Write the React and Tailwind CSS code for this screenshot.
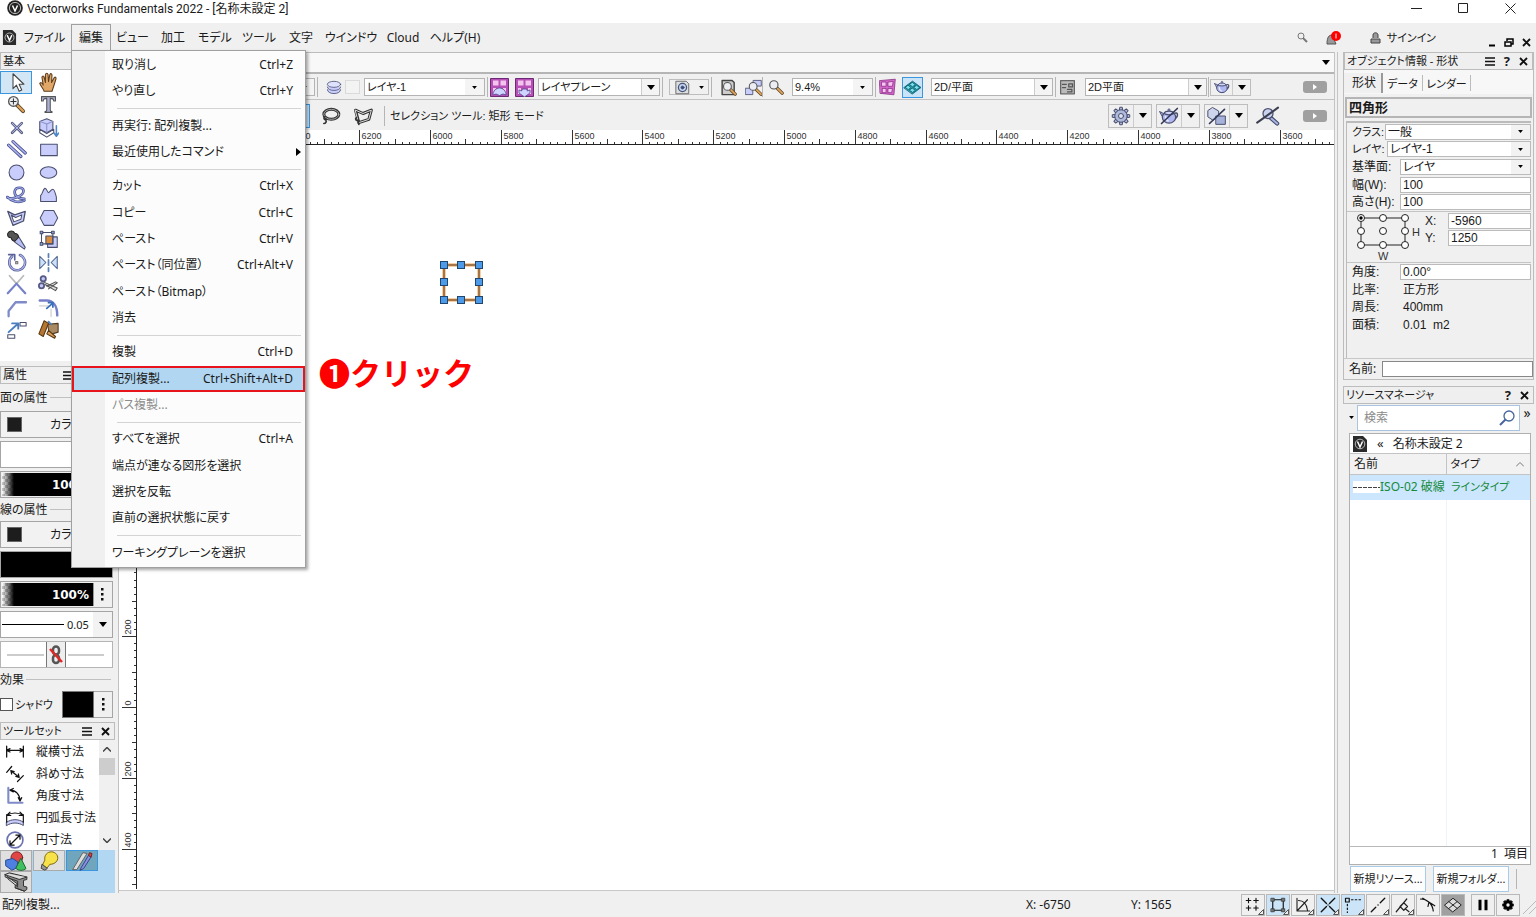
// src/App.jsx

import React from 'react';

const Icon = ({ w = 22, h = 22, box = '0 0 24 24', children }) => (
  <svg width={w} height={h} viewBox={box} fill="none" stroke="#4a4f6e" strokeWidth="1.2" strokeLinejoin="round" strokeLinecap="round" className="shrink-0" aria-hidden="true">
    {children}
  </svg>
);

const Caret = ({ small }) => (
  <svg width={small ? 5 : 8} height={small ? 3 : 5} viewBox="0 0 8 5" className="shrink-0" aria-hidden="true">
    <path d="M0 0h8L4 5z" fill="#000" />
  </svg>
);

const Burger = () => (
  <svg width="10" height="9" viewBox="0 0 10 9" aria-hidden="true">
    <path d="M0 1h10M0 4.500h10M0 8h10" stroke="#111" strokeWidth="1.600" />
  </svg>
);

const Cross = () => (
  <svg width="9" height="9" viewBox="0 0 9 9" aria-hidden="true">
    <path d="M1 1l7 7M8 1L1 8" stroke="#111" strokeWidth="1.900" />
  </svg>
);

const VLogo = ({ size = 16, square }) => (
  <svg width={size} height={size} viewBox="0 0 16 16" className="shrink-0" aria-hidden="true">
    {square ? <path d="M1 0h10l4 4v12H1z" fill="#2b2b2b" /> : <circle cx="8" cy="8" r="7.800" fill="#222" />}
    <circle cx="8" cy="8" r={square ? 4.8 : 5.6} fill="none" stroke="#bbb" strokeWidth="1" />
    <path d="M5.500 5.500L8 11l2.500-5.500" fill="none" stroke="#fff" strokeWidth="1.500" />
  </svg>
);

const Lens = ({ x = 0, y = 0 }) => (
  <g transform={`translate(${x} ${y})`}>
    <path d="M12.500 12.500l7 7" stroke="#5d4426" strokeWidth="4.500" />
    <path d="M13.500 13.500l6 6" stroke="#e0a55b" strokeWidth="2.500" />
    <circle cx="8.500" cy="8.500" r="5.500" fill="#eceef4" stroke="#555" strokeWidth="1.500" />
  </g>
);

const BLUE = '#c9cdfb';
const LINE = '#7f8ac8';

const basicTools = [
  ['選択', <path d="M8 2v17l4-4 3 7 3-1.500-3-6.500h5.500z" fill="#fff" stroke="#444" />],
  ['パン', <path d="M7 22c-1-3-4-6-5-9 1-2 3 0 4 2L4.500 6c.5-2 2-2 2.500 0l1.500 6L8.500 3c.5-2 2.500-2 3 0l.5 8 1.500-8c1-2 2.500-1 2.500.5L15.500 12l3-5.500c1.500-1.500 2.500 0 2 1.500L18 16l-2 6z" fill="#e0a767" stroke="#5b3c1c" />],
  ['ズーム', <><Lens /><path d="M5.500 8.500h6M8.500 5.500v6" stroke="#333" /></>],
  ['文字', <path d="M4 3h16v5h-2c0-2-1-3-4-3v13c0 1 1 2 2 2v1H8v-1c1 0 2-1 2-2V5C7 5 6 6 6 8H4z" fill="#aab0d4" stroke="#555" />],
  ['2D基準点', <><path d="M7 7l11 11M18 7L7 18" stroke="#4a4f6e" strokeWidth="3" /><path d="M7 7l11 11M18 7L7 18" stroke="#b4baf0" strokeWidth="1.200" /></>],
  ['押し出し', <><path d="M2 14l8 5 8-5v4l-8 5-8-5z" fill="#fff" /><path d="M2 5l8-3 7 3v9l-7 4-8-4z" fill={BLUE} /><path d="M2 5l8 3 7-3M10 8v10" stroke="#8890c8" /><path d="M21 10v11M18.500 18.500L21 22l2.500-3.500" stroke="#4b86c8" strokeWidth="1.800" /></>],
  ['ダブルライン', <><path d="M3 7l14 13M8 3l14 13" stroke="#4a4f8e" strokeWidth="3.600" /><path d="M3 7l14 13M8 3l14 13" stroke="#a9b2ee" strokeWidth="1.800" /></>],
  ['四角形', <path d="M3 6h19v13H3z" fill={BLUE} />],
  ['円', <circle cx="12" cy="12" r="8.500" fill={BLUE} />],
  ['長円', <ellipse cx="12" cy="12" rx="9.500" ry="6.500" fill={BLUE} />],
  ['フリーハンド', <><path d="M1 15c5 4 19-1 19-7 0-5-9-5-10 0-1 6 5 9 11 9M2 15c4 5 12 7 19 4" stroke="#4a5494" strokeWidth="3" /><path d="M1 15c5 4 19-1 19-7 0-5-9-5-10 0-1 6 5 9 11 9M2 15c4 5 12 7 19 4" stroke="#a3adeb" strokeWidth="1.200" /></>],
  ['曲線', <path d="M3 20v-7c2-1 3-8 5-8s3 5 4 5 3-4 5-4 3 6 4 9v5z" fill={BLUE} />],
  ['ポリライン', <><path d="M2 5l8 4 12-4-2 11-12 5z" fill={BLUE} strokeWidth="1.500" /><path d="M6 9l5 3 7-3-1 5-8 3z" fill="#fff" /></>],
  ['多角形', <path d="M7 4h11l4.500 8.500L18 21H7l-4.500-8.500z" fill={BLUE} />],
  ['アイドロッパ', <><path d="M10 10l4-2 8 13-1 2-11-8z" fill="#b9c0f5" /><path d="M2 5c2-4 7-3 8 0 3 0 5 3 4 5l-4 4c-2 0-4-2-4-4-3 0-5-2-4-5z" fill="#555" stroke="#222" /></>],
  ['クリップ', <><path d="M11 9h11v12H11z" fill={BLUE} /><path d="M9 8h8v9H9z" fill="#d98e3f" /><path d="M4 4h13v13H4z" /><path d="M2.500 2.500h3v3h-3zM15.500 2.500h3v3h-3zM2.500 15.500h3v3h-3z" fill="#8fa7e0" /></>],
  ['回転', <><path d="M7 5a9 9 0 1 0 9-1.500" stroke="#59619a" strokeWidth="3" /><path d="M7 5a9 9 0 1 0 9-1.500" stroke="#b6bdf3" strokeWidth="1.300" /><path d="M3 3h7v6" stroke="#59619a" strokeWidth="1.800" /><path d="M11 11h2.500v2.500H11z" fill="#ccc" stroke="#777" /></>],
  ['ミラー反転', <><path d="M2 5l7 7-7 7zM22 5l-7 7 7 7z" fill="#cfe0fa" stroke="#4d6591" /><path d="M12 2v4M12 9v6M12 18v4" stroke="#5a80b8" strokeWidth="2" /></>],
  ['トリム', <><path d="M4 2l8 9 8-9" stroke="#bbb" strokeWidth="2" /><path d="M2 22l10-11 10 11" stroke="#7680c8" strokeWidth="2.500" /></>],
  ['切断', <><path d="M6 9l16 7-2 3-12-7M10 14L20 9l2 1-10 7" fill="#ddd" stroke="#555" /><circle cx="6" cy="5.500" r="3" fill="#c5c9f4" stroke="#555a85" strokeWidth="2" /><circle cx="4" cy="13.500" r="3" fill="#c5c9f4" stroke="#555a85" strokeWidth="2" /></>],
  ['フィレット', <path d="M3 22v-6l8-10h12" stroke={LINE} strokeWidth="2.600" />],
  ['オフセット', <><path d="M2 4h8c8 0 12 7 12 17" stroke="#7680c8" strokeWidth="2.800" /><path d="M2 10h10M15 14v8" stroke="#ddd" strokeWidth="2" /><path d="M10 13l7-6M12 6.500h5v5" stroke="#3a70b8" strokeWidth="2" /></>],
  ['移動', <><path d="M2 18h8v4H2zM16 4h7v4h-7z" fill="#fff" /><path d="M3 15l10-9M7 5h7v6" stroke="#4d7ec0" strokeWidth="2.200" /></>],
  ['属性マッピング', <><path d="M11 6l12-1v10l-10 3z" fill="#a98a63" stroke="#4e3a22" /><path d="M7 2l5 3-6 15-5-3z" fill="#b57632" stroke="#56350f" /><path d="M12 13l8 7-1 2-9-5z" fill="#d69b58" stroke="#56350f" /><path d="M12 3l3 3" stroke="#4d7ec0" strokeWidth="2" /></>],
];

const dimensionTools = [
  ['縦横寸法', <path d="M2 5v13M22 5v13M2 10h20M6 8l-4 2 4 2M18 8l4 2-4 2" stroke="#111" strokeWidth="1.500" />],
  ['斜め寸法', <path d="M2 10l6-7M15 21l7-7M7 8l10 8M7 8l4 1M7 8l1 4M17 16l-4-1M17 16l-1-4" stroke="#111" strokeWidth="1.500" />],
  ['角度寸法', <><path d="M4 2v18h17" stroke={LINE} strokeWidth="2.500" /><path d="M6 5c7 0 12 5 12 13M6 5l4-2M6 5l4 2M18 18l-2-4M18 18l2-4" stroke="#111" strokeWidth="1.500" /></>],
  ['円弧長寸法', <><path d="M2 17c6-4 14-4 20 0v4c-6-4-14-4-20 0z" fill={BLUE} /><path d="M2 8v9M22 8v9M2 9c6-4 14-4 20 0M6 5L2 9h5M18 5l4 4h-5" stroke="#111" strokeWidth="1.400" /></>],
  ['円寸法', <><circle cx="12" cy="12" r="9.500" stroke="#6a73b2" strokeWidth="2" /><path d="M6 18L18 6M13 6h5v5M6 13v5h5" stroke="#111" strokeWidth="1.500" /></>],
];

const menuBar = [
  ['ファイル', 'w-[51px]'],
  ['編集', 'w-[40px]'],
  ['ビュー', 'w-[41px]'],
  ['加工', 'w-[40px]'],
  ['モデル', 'w-[44px]'],
  ['ツール', 'w-[44px]'],
  ['文字', 'w-[40px]'],
  ['ウインドウ', 'w-[60px]'],
  ['Cloud', 'w-[44px]'],
  ['ヘルプ(H)', 'w-[60px]'],
];

const editMenu = [
  ['取り消し', 'Ctrl+Z'],
  ['やり直し', 'Ctrl+Y'],
  null,
  ['再実行: 配列複製...', ''],
  ['最近使用したコマンド', '', 'sub'],
  null,
  ['カット', 'Ctrl+X'],
  ['コピー', 'Ctrl+C'],
  ['ペースト', 'Ctrl+V'],
  ['ペースト（同位置）', 'Ctrl+Alt+V'],
  ['ペースト（Bitmap）', ''],
  ['消去', ''],
  null,
  ['複製', 'Ctrl+D'],
  ['配列複製...', 'Ctrl+Shift+Alt+D', 'active'],
  ['パス複製...', '', 'disabled'],
  null,
  ['すべてを選択', 'Ctrl+A'],
  ['端点が連なる図形を選択', ''],
  ['選択を反転', ''],
  ['直前の選択状態に戻す', ''],
  null,
  ['ワーキングプレーンを選択', ''],
];

const EditMenu = () => (
  <div role="menu" className="absolute left-[71px] top-[50px] z-20 flex h-[518px] w-[235px] flex-col border border-[#a0a0a0] bg-[linear-gradient(to_right,#f0f0f0_33px,#fcfcfc_33px)] py-px shadow-[2px_2px_3px_rgba(0,0,0,0.35)]">
    {editMenu.map((item, i) =>
      item === null ? (
        <div key={i} role="separator" className="flex h-2 shrink-0 items-center pl-[45px] pr-1">
          <span className="h-px w-full bg-[#d4d4d4]" />
        </div>
      ) : (
        <button
          key={i}
          role="menuitem"
          disabled={item[2] === 'disabled'}
          className={
            'flex min-h-0 flex-1 items-center justify-between whitespace-nowrap border-2 pl-[38px] pr-[10px] disabled:text-[#8c8c8c] ' +
            (item[2] === 'active' ? 'border-[#e8141c] bg-[#b1d6f1]' : 'border-transparent')
          }
        >
          <span>{item[0]}</span>
          <span>{item[1]}</span>
          {item[2] === 'sub' && (
            <svg width="5" height="8" viewBox="0 0 5 8" className="-mr-2" aria-hidden="true">
              <path d="M0 0v8l5-4z" fill="#000" />
            </svg>
          )}
        </button>
      )
    )}
  </div>
);

const Sep = ({ className = '' }) => <span className={'h-5 w-px shrink-0 bg-[#b5b5b5] ' + className} />;

const Drop = ({ label, value, className = '', small }) => (
  <div className={'flex h-[18px] shrink-0 items-center border border-[#b4b4b4] bg-white ' + className}>
    <select aria-label={label} className="h-full min-w-0 flex-1 appearance-none bg-white pl-[2px] text-[11px] leading-none outline-none">
      <option>{value}</option>
    </select>
    <span className={'flex h-full shrink-0 items-center justify-center bg-[#f4f4f4] ' + (small ? 'w-[19px]' : 'w-[18px] border-l border-[#ccc]')}>
      <Caret small={small} />
    </span>
  </div>
);

const SplitButton = ({ label, children, className = '' }) => (
  <div className={'flex shrink-0 border border-[#bdbdbd] ' + className}>
    <button aria-label={label} className="flex flex-1 items-center justify-center">{children}</button>
    <button aria-label={label + 'の設定'} className="flex w-[18px] items-center justify-center border-l border-[#ccc]"><Caret /></button>
  </div>
);

const Pill = () => (
  <button aria-label="その他" className="ml-auto mr-[7px] flex h-3 w-6 items-center justify-center rounded-[3px] bg-[#a0a0a0]">
    <svg width="4" height="6" viewBox="0 0 4 6" aria-hidden="true"><path d="M0 0v6l4-3z" fill="#fff" /></svg>
  </button>
);

const PlaneIcon = ({ down }) => (
  <svg width="19" height="19" viewBox="0 0 19 19" className="shrink-0" aria-hidden="true">
    <path d="M.5.500h18v18H.500z" fill="#b650b6" stroke="#6c2a75" />
    <path d="M3 2.500h5.500v5H3zM10.500 2.500H16v5h-5.500zM3 10h3v6H3zM13 10h3v6h-3z" fill="#f3c4ee" />
    <path d={down ? 'M4 12l2.500 1 1-2h4l1 2 2.500-1v3l-5.500 4L4 15z' : 'M3 17c0-4 3-7 6.500-7s6.500 3 6.500 7l-3-1-3.500 1.500L6 16z'} fill="#cfd3ff" stroke="#4f4a8c" strokeWidth=".8" />
  </svg>
);

const Teapot = () => (
  <>
    <path d="M18 9c5-3 6 4 0 7" strokeWidth="1.800" />
    <path d="M1 7l3 1c2 2 2 4 3 7-3-1-4-4-6-8z" fill="#9ca6e4" />
    <ellipse cx="12" cy="13.500" rx="8" ry="7" fill="#b0b8f2" strokeWidth="1.500" />
    <path d="M6 9c1-4 11-4 12 0-3 2-9 2-12 0z" fill="#cfd4fb" strokeWidth="1.500" />
    <path d="M11 5.500c-1-3 3-3 2 0" fill="#b0b8f2" />
    <path d="M8 13c0 2 1 4 3 5" stroke="#eef" strokeWidth="1.800" />
  </>
);

const ViewBar = () => (
  <div className="flex h-[25px] items-center border-b border-[#c2c2c2]">
    <Drop label="クラス" value="一般" small className="w-[196px]" />
    <Sep className="ml-[2px] mr-2" />
    <Icon w={16} h={16}>
      <path d="M2 16c0 8 20 8 20 0M2 12c0 7 20 7 20 0" fill={BLUE} />
      <ellipse cx="12" cy="8" rx="10" ry="4.500" fill="#dfe2ff" />
    </Icon>
    <span className="ml-[3px] mr-1 h-[14px] w-[15px] border border-[#dadada] bg-[#f3f3f3]" />
    <Drop label="レイヤ" value="レイヤ-1" small className="w-[121px]" />
    <Sep className="mx-[2px]" />
    <button aria-label="上のレイヤ"><PlaneIcon /></button>
    <button aria-label="下のレイヤ" className="ml-[6px]"><PlaneIcon down /></button>
    <Drop label="プレーン" value="レイヤプレーン" className="ml-1 w-[122px]" />
    <Sep className="ml-[2px] mr-[6px]" />
    <div className="flex h-4 w-10 shrink-0 items-center justify-around border border-[#bdbdbd]">
      <Icon w={15} h={15}>
        <path d="M2 2h16l4 4v16H2z" fill="#ddd" stroke="#666" strokeWidth="1.500" />
        <circle cx="12" cy="12" r="6.500" fill="#cdd5f0" stroke="#3f567c" strokeWidth="2" />
        <circle cx="12" cy="12" r="2.500" fill="#33507c" />
      </Icon>
      <Caret small />
    </div>
    <Sep className="ml-[2px] mr-2" />
    <button aria-label="用紙全体を見る"><Icon w={17} h={17}><path d="M3 2h14l3 3v17H3z" fill="#ccc" stroke="#444" strokeWidth="2" /><Lens x={2} y={2} /></Icon></button>
    <button aria-label="図形全体を見る" className="ml-2"><Icon w={17} h={17}><path d="M12 2h11v8H12zM1 13h10v9H1z" fill={BLUE} /><Lens x={3} y={2} /></Icon></button>
    <Sep className="mr-[6px]" />
    <button aria-label="ズーム"><Icon w={15} h={15} box="2 2 20 20"><Lens /></Icon></button>
    <Drop label="縮尺" value="9.4%" small className="ml-2 w-[81px]" />
    <Sep className="mx-[2px]" />
    <button aria-label="マルチビュー" className="ml-px">
      <Icon w={17} h={18}>
        <path d="M1 3l22-2-2 22-19-2z" fill="#d867cf" stroke="#8d3688" />
        <path d="M4 5h6v6H4zM13 5l7-1-1 7h-6zM5 14h5v6H5zM13 14h6l-1 6h-5z" fill="#f7c6f2" stroke="#8d3688" />
      </Icon>
    </button>
    <button aria-label="統合ビュー" className="ml-[6px] flex size-[21px] items-center justify-center border border-[#3b96dd] bg-[#c9e3f7]">
      <Icon w={19} h={17}>
        <path d="M0 12L12 3l12 9-12 9z" fill="#2fa3b3" stroke="#0b5d70" />
        <path d="M12 5l4 3-4 3-4-3zM6 9l4 3-4 3-4-3zM18 9l4 3-4 3-4-3zM12 13l4 3-4 3-4-3z" fill="#7be0e8" stroke="#0b5d70" />
      </Icon>
    </button>
    <Drop label="現在のビュー" value="2D/平面" className="ml-2 w-[122px]" />
    <Sep className="ml-[2px] mr-1" />
    <Icon w={15} h={15}>
      <path d="M1 1h22v21H1z" fill="#bbb" stroke="#666" strokeWidth="2" />
      <path d="M4 7h6M4 12h5M14 6h6v5h-6zM12 15h7v4h-7" stroke="#555" strokeWidth="2" />
    </Icon>
    <Drop label="投影の方法" value="2D平面" className="ml-[10px] w-[122px]" />
    <Sep className="mx-px" />
    <SplitButton label="レンダリング" className="h-[17px] w-[41px]"><Icon w={16} h={16}><Teapot /></Icon></SplitButton>
    <Pill />
  </div>
);

const GEAR_TEETH = [0, 45, 90, 135, 180, 225, 270, 315];

const ModeBar = () => (
  <div className="flex h-[30px] items-center pt-px">
    <button aria-label="矩形モード" className="ml-[164px] h-6 w-[27px] shrink-0 border border-[#3b96dd] bg-[#c9e3f7]" />
    <button aria-label="なげなわモード" className="ml-[10px]">
      <Icon w={21} h={20}>
        <ellipse cx="13" cy="10" rx="9" ry="6" stroke="#333" strokeWidth="3.600" />
        <ellipse cx="13" cy="10" rx="9" ry="6" stroke="#bbb" strokeWidth="1" />
        <path d="M5 13c-2 2 0 4 2 3M6 16c2 3 0 5-2 5" stroke="#333" strokeWidth="2" />
      </Icon>
    </button>
    <button aria-label="多角形モード" className="ml-[11px]">
      <Icon w={22} h={20}>
        <path d="M3 5l9 4 10-4-3 11-12 4z" stroke="#333" strokeWidth="3.600" />
        <path d="M3 5l9 4 10-4-3 11-12 4z" stroke="#ddd" strokeWidth="1.200" />
        <path d="M4 14c-2 2 0 4 2 3M6 17l1 5" stroke="#333" strokeWidth="2" />
      </Icon>
    </button>
    <Sep className="ml-[10px] mr-[5px]" />
    <span className="whitespace-nowrap text-[11px]">セレクション ツール: 矩形 モード</span>
    <div className="ml-auto flex shrink-0 items-center gap-1 pr-[22px]">
      <SplitButton label="環境設定" className="h-6 w-11">
        <Icon w={20} h={20}>
          {GEAR_TEETH.map((a) => (
            <path key={a} d="M10 5l.5-3.500h3L14 5z" fill="#aeb9dc" transform={`rotate(${a} 12 12)`} />
          ))}
          <circle cx="12" cy="12" r="7.500" fill="#aeb9dc" />
          <circle cx="12" cy="12" r="3" fill="#dfe4f5" />
        </Icon>
      </SplitButton>
      <SplitButton label="レンダー表示" className="h-6 w-11">
        <Icon w={20} h={20}><Teapot /><path d="M3 21L22 3" stroke="#333a58" strokeWidth="2" /></Icon>
      </SplitButton>
      <SplitButton label="図形表示" className="h-6 w-11">
        <Icon w={20} h={20}><path d="M7 2l7 4v7l-7 4-6-4V6z" fill="#ccd5ec" /><path d="M11 12h11v10H11z" fill="#a6b2da" /><path d="M3 21L21 4" stroke="#333a58" strokeWidth="2" /></Icon>
      </SplitButton>
      <button aria-label="クイック検索" className="ml-[3px]">
        <Icon w={26} h={20} box="0 0 30 24">
          <path d="M18 14l8 7" stroke="#3f486b" strokeWidth="5" />
          <path d="M19 15l7 6" stroke="#a8b6e0" strokeWidth="2.500" />
          <circle cx="15" cy="9" r="6" fill="#c9d3f0" strokeWidth="1.500" />
          <path d="M2 20L27 2" stroke="#3c4052" strokeWidth="2.500" />
        </Icon>
      </button>
    </div>
    <div className="flex shrink-0"><Pill /></div>
  </div>
);

// ruler scale: 200mm is 70.8px on screen
const STEP = 70.8;

const rulerTicks = (origin, from, to) => {
  const ticks = [];
  const unit = STEP / 10;
  for (let n = Math.ceil((from - origin) / unit); origin + n * unit < to; n++) {
    ticks.push({ n, pos: Math.round(origin + n * unit) + 0.5 });
  }
  return ticks;
};

const TopRuler = () => (
  <div className="h-[15px] bg-white">
    <svg width="1216" height="15" className="font-['Liberation_Sans']" aria-hidden="true">
      {rulerTicks(311, 18, 1216).map(({ n, pos }) => (
        <g key={n}>
          <path d={`M${pos} ${n % 10 === 0 ? 0 : n % 5 === 0 ? 9 : 12}V15`} stroke="#333" />
          {n % 10 === 0 && <text x={pos + 2} y="9" fontSize="9" fill="#333">{6000 - n * 20}</text>}
        </g>
      ))}
      <path d="M18 14.500H1216" stroke="#222" />
    </svg>
  </div>
);

const SideRuler = () => (
  <svg width="18" height="744" className="shrink-0 font-['Liberation_Sans']" aria-hidden="true">
    {rulerTicks(562, 0, 744).map(({ n, pos }) => (
      <g key={n}>
        <path d={`M${n % 10 === 0 ? 3 : n % 5 === 0 ? 13 : 15} ${pos}H18`} stroke="#333" />
        {n % 10 === 0 && (
          <text transform={`translate(12 ${pos - 2}) rotate(-90)`} fontSize="9" fill="#333">{Math.abs(n * 20)}</text>
        )}
      </g>
    ))}
    <path d="M17.500 0V744" stroke="#222" />
  </svg>
);

const handles = [[0, 0], [17, 0], [35, 0], [0, 17], [35, 17], [0, 35], [17, 35], [35, 35]];

const Canvas = () => (
  <div className="relative min-h-0 flex-1 overflow-hidden border-b border-[#c8c8c8] bg-white">
    <SideRuler />
    <svg width="44" height="44" className="absolute left-[321px] top-[115px]" aria-hidden="true">
      <path d="M4 5h35v35H4z" fill="none" stroke="#f0a050" strokeWidth="3" />
      <path d="M4 5h35v35H4z" fill="none" stroke="#5b4a3a" strokeWidth="1" />
      {handles.map(([x, y]) => (
        <rect key={x + '-' + y} x={x + 0.5} y={y + 1.5} width="7" height="7" fill="#4d9be8" stroke="#1f4670" />
      ))}
    </svg>
    <div className="absolute left-[200px] top-[208px] whitespace-nowrap text-[31px] font-bold leading-[44px] text-[#f00] [font-feature-settings:normal]">
      ❶クリック
    </div>
  </div>
);

const PanelHeader = ({ title, help, burger }) => (
  <div className="flex h-[18px] shrink-0 items-center justify-between border border-[#bcbcbc] bg-[#efefef] pl-[2px] pr-1">
    <h2 className="whitespace-nowrap text-[11px]">{title}</h2>
    <div className="flex items-center gap-[9px]">
      {burger && <button aria-label="メニュー"><Burger /></button>}
      {help && <button className="text-[13px] font-bold leading-none">?</button>}
      <button aria-label="閉じる"><Cross /></button>
    </div>
  </div>
);

const GroupTitle = ({ children, className = 'h-[23px]' }) => (
  <div className={'flex shrink-0 items-center whitespace-nowrap ' + className}>
    {children}
    <span className="ml-[2px] mr-1 h-px flex-1 bg-[#c0c0c0]" />
  </div>
);

const ColorRow = ({ label }) => (
  <button aria-label={label} className="flex h-[27px] w-[113px] shrink-0 items-center border border-[#a5a5a5] bg-[#f2f2f2] pl-[6px]">
    <span className="size-[15px] border border-[#666] bg-[#1d1d1d]" />
    <span className="ml-7">カラー</span>
  </button>
);

const Dots = () => (
  <svg width="3" height="13" viewBox="0 0 3 13" aria-hidden="true">
    <path d="M0 0h2.500v2.500H0zM0 5h2.500v2.500H0zM0 10h2.500v2.500H0z" fill="#111" />
  </svg>
);

const OpacityRow = () => (
  <div className="flex h-[27px] w-[113px] shrink-0 border border-[#a5a5a5] p-px">
    <button className="flex-1 bg-[linear-gradient(to_right,transparent,#000_12px),repeating-conic-gradient(#ccc_0_25%,#fff_0_50%)] bg-[length:auto,6px_6px] pr-1 text-right font-['DejaVu_Sans'] text-[12px] font-bold leading-none text-white">100%</button>
    <button aria-label="不透明度の設定" className="flex w-[18px] items-center justify-center border-l border-[#999]"><Dots /></button>
  </div>
);

const LeftPanel = () => (
  <aside className="flex w-[115px] shrink-0 flex-col">
    <PanelHeader title="基本" />
    <div className="h-[291px] shrink-0 bg-white pt-px">
      <div className="grid h-[270px] w-16 grid-cols-2 grid-rows-12">
        {basicTools.map(([name, art], i) => (
          <button key={name} aria-label={name} className={'flex items-center justify-center ' + (i === 0 ? 'border border-[#3b96dd] bg-[#d2e6f6]' : '')}>
            <Icon w={21} h={21}>{art}</Icon>
          </button>
        ))}
      </div>
    </div>
    <div className="mt-[5px] flex h-[18px] shrink-0 items-center border border-[#bcbcbc] pl-[2px]">
      <h2>属性</h2>
      <button aria-label="属性メニュー" className="ml-9"><Burger /></button>
    </div>
    <GroupTitle className="h-[27px]">面の属性</GroupTitle>
    <ColorRow label="面のカラー" />
    <button aria-label="面の色" className="my-[3px] h-[27px] w-[113px] shrink-0 border border-[#a5a5a5] bg-white" />
    <OpacityRow />
    <GroupTitle>線の属性</GroupTitle>
    <ColorRow label="線のカラー" />
    <button aria-label="線の色" className="my-[3px] h-[27px] w-[113px] shrink-0 border border-[#a5a5a5] bg-black" />
    <OpacityRow />
    <button aria-label="線の太さ" className="mt-[3px] flex h-[27px] w-[113px] shrink-0 items-center border border-[#a5a5a5] bg-white text-[11px]">
      <span className="ml-px mr-[3px] h-px w-[62px] bg-black" />
      0.05
      <span className="ml-auto flex h-full w-[19px] items-center justify-center bg-[#f2f2f2]"><Caret /></span>
    </button>
    <div className="mt-[3px] flex h-[27px] w-[113px] shrink-0 items-center border border-[#b5b5b5] bg-white">
      <span className="ml-[6px] h-[2px] flex-1 bg-[#ccc]" />
      <button aria-label="始点と終点をリンク" className="mx-[2px] flex h-full w-[20px] items-center justify-center border-x border-[#777] bg-[#eee]">
        <svg width="14" height="20" viewBox="0 0 14 20" fill="none" aria-hidden="true">
          <rect x="4" y="1.500" width="6" height="8" rx="3" stroke="#555" strokeWidth="2.500" />
          <rect x="4" y="10" width="6" height="8" rx="3" stroke="#555" strokeWidth="2.500" />
          <path d="M1 4l12 13" stroke="#e02828" strokeWidth="2.500" />
        </svg>
      </button>
      <span className="mr-2 h-[2px] flex-1 bg-[#ccc]" />
    </div>
    <GroupTitle>効果</GroupTitle>
    <div className="flex h-[27px] w-[113px] shrink-0 items-center">
      <input id="shadow" type="checkbox" className="size-[13px] appearance-none border border-[#555] bg-white" />
      <label htmlFor="shadow" className="ml-[2px] flex-1 whitespace-nowrap text-[11px]">シャドウ</label>
      <button aria-label="シャドウの色" className="h-full w-8 border border-[#777] bg-black" />
      <button aria-label="シャドウの設定" className="flex h-full w-[19px] items-center justify-center border border-l-0 border-[#a5a5a5]"><Dots /></button>
    </div>
    <div className="h-1 shrink-0" />
    <PanelHeader title="ツールセット" burger />
    <div className="flex h-[110px] shrink-0 overflow-hidden bg-white">
      <div className="flex-1 pt-px">
        {dimensionTools.map(([name, art]) => (
          <button key={name} className="flex h-[22px] w-full items-center gap-[10px] whitespace-nowrap pl-1">
            <Icon w={22} h={20}>{art}</Icon>
            {name}
          </button>
        ))}
      </div>
      <div className="flex w-4 flex-col items-center justify-between bg-[#f0f0f0] py-[7px]">
        <svg width="8" height="5" viewBox="0 0 8 5" aria-hidden="true"><path d="M0 4.500l4-4 4 4" fill="none" stroke="#444" strokeWidth="1.500" /></svg>
        <span className="mb-auto mt-[6px] h-[17px] w-4 bg-[#cdcdcd]" />
        <svg width="8" height="5" viewBox="0 0 8 5" aria-hidden="true"><path d="M0 .5l4 4 4-4" fill="none" stroke="#444" strokeWidth="1.500" /></svg>
      </div>
    </div>
    <div className="grid flex-1 grid-cols-[32px_32px_32px] content-start gap-x-px bg-[#b2d7f2]">
      <button aria-label="3Dモデリング" className="flex h-[21px] items-center justify-center border border-[#aaa] bg-[#e0e0e0]">
        <Icon w={24} h={20} box="0 0 28 24">
          <circle cx="15" cy="8" r="7" fill="#e14646" stroke="#7c2222" />
          <path d="M2 11l8-2 6 4v7l-7 3-7-5z" fill="#4f7fe0" stroke="#234a97" />
          <path d="M20 9l6 12c-3 3-9 3-12 0z" fill="#3fbf5f" stroke="#1d6b33" />
        </Icon>
      </button>
      <button aria-label="ビジュアライズ" className="flex h-[21px] items-center justify-center border border-[#aaa] bg-[#e0e0e0]">
        <Icon w={22} h={20}>
          <path d="M4 17l3-6c-1-6 3-10 8-10s9 5 7 10c-2 4-6 5-9 5l-3 4z" fill="#f8e24a" stroke="#7a6a10" />
          <path d="M4 16l6 5-3 2-4-2z" fill="#999" stroke="#444" />
        </Icon>
      </button>
      <button aria-label="寸法/注釈" className="flex h-[21px] items-center justify-center border border-[#3b96dd] bg-[#6fa5bd]">
        <Icon w={24} h={20} box="0 0 28 24">
          <path d="M3 22L15 2l5 1L8 22z" fill="#ddd" stroke="#666" />
          <path d="M13 20L22 5l3 2-9 14-4 2z" fill="#8891e0" stroke="#3d4484" />
          <path d="M22 5l1-3 3 1-1 4z" fill="#d44" stroke="#722" />
        </Icon>
      </button>
      <button aria-label="機械部品" className="flex h-[22px] items-center justify-center border border-[#aaa] bg-[#e0e0e0]">
        <Icon w={26} h={20} box="0 0 28 24">
          <path d="M1 3l5-2 21 5v3l-4 1v7l4 1v3l-3 2-11-4v-3l3-1z" fill="#8c8c8c" stroke="#333" />
          <path d="M1 3l17 6 9-3M1 3v3l15 5v7M13 19l11 4M4 8l11 9" fill="none" stroke="#333" />
          <path d="M2 3l4-1 19 4-7 2z" fill="#ddd" stroke="none" />
        </Icon>
      </button>
    </div>
  </aside>
);

const Field = ({ label, value, select, className }) => (
  <div className="flex min-w-0 items-center pl-[5px]">
    <label htmlFor={'f-' + label} className={'shrink-0 whitespace-nowrap ' + className}>{label}</label>
    {select ? (
      <div className="flex h-4 min-w-0 flex-1 border border-[#bbb] bg-white">
        <select id={'f-' + label} className="min-w-0 flex-1 appearance-none pl-[2px] leading-none outline-none"><option>{value}</option></select>
        <span className="flex w-[19px] items-center justify-center bg-[#f2f2f2]"><Caret small /></span>
      </div>
    ) : (
      <input id={'f-' + label} defaultValue={value} className="h-4 min-w-0 flex-1 border border-[#bbb] bg-white pl-[2px] leading-none outline-none" />
    )}
  </div>
);

const anchors = [[0, 0], [22, 0], [44, 0], [0, 13], [22, 13], [44, 13], [0, 27], [22, 27], [44, 27]];

const ObjectInfo = () => (
  <section className="flex h-[328px] shrink-0 flex-col border-x border-b border-[#bcbcbc]">
    <PanelHeader title="オブジェクト情報 - 形状" help burger />
    <div className="flex h-6 shrink-0 items-center bg-[#f7f7f7] pt-[2px]">
      <button className="h-5 border-r-2 border-[#999] bg-[#f0f0f0] pl-[8px] pr-[5px]">形状</button>
      <button className="h-4 w-10 border-r border-[#bbb] text-[11px] leading-none">データ</button>
      <button className="h-4 w-12 border-r border-[#bbb] text-[11px] leading-none">レンダー</button>
    </div>
    <div className="mx-px mt-[3px] h-[21px] shrink-0 border-2 border-[#b5b5b5] pl-[2px] text-[13px] font-bold leading-[17px]">四角形</div>
    <div className="mx-[2px] mt-[3px] flex-1 border-l border-t-2 border-[#bbb] font-['Liberation_Sans','Noto_Sans_CJK_JP',sans-serif]">
      <div className="grid h-[88px] grid-cols-1 grid-rows-5">
        <Field label="クラス:" value="一般" select className="w-[33px] text-[11px]" />
        <Field label="レイヤ:" value="レイヤ-1" select className="w-[35px] text-[11px]" />
        <Field label="基準面:" value="レイヤ" select className="w-[48px]" />
        <Field label="幅(W):" value="100" className="w-[48px]" />
        <Field label="高さ(H):" value="100" className="w-[48px]" />
      </div>
      <div className="flex h-[52px] items-start border-y border-[#c4c4c4]">
        <svg width="80" height="50" viewBox="0 0 80 50" className="shrink-0" aria-hidden="true">
          <path d="M14 6h44v27H14z" fill="none" stroke="#222" />
          {anchors.map(([x, y]) => (
            <circle key={x + '-' + y} cx={x + 14} cy={y + 6} r="3.500" fill="#fff" stroke="#222" />
          ))}
          <circle cx="14" cy="6" r="1.700" fill="#000" />
          <text x="65" y="24" fontSize="11" fill="#333">H</text>
          <text x="31" y="48" fontSize="11" fill="#333">W</text>
        </svg>
        <div className="-ml-[7px] grid h-[35px] min-w-0 flex-1 grid-cols-1 grid-rows-2">
          <Field label="X:" value="-5960" className="w-[23px]" />
          <Field label="Y:" value="1250" className="w-[23px]" />
        </div>
      </div>
      <div className="grid h-[71px] grid-cols-1 grid-rows-4">
        <Field label="角度:" value="0.00°" className="w-[48px]" />
        {[['比率:', '正方形'], ['周長:', '400mm'], ['面積:', '0.01  m2']].map(([k, v]) => (
          <div key={k} className="flex items-center whitespace-pre pl-[5px]">
            <span className="w-[51px]">{k}</span>
            <span>{v}</span>
          </div>
        ))}
      </div>
    </div>
    <div className="flex h-[21px] shrink-0 items-center border-t border-[#c8c8c8] pl-[5px]">
      <label htmlFor="object-name" className="w-[33px]">名前:</label>
      <input id="object-name" className="h-4 min-w-0 flex-1 border border-[#888] bg-white outline-none" />
    </div>
  </section>
);

const ResourceManager = () => (
  <section className="mt-[6px] flex min-h-0 flex-1 flex-col">
    <PanelHeader title="リソースマネージャ" help />
    <div className="flex h-[29px] shrink-0 items-start pl-[6px] pt-px">
      <span className="flex h-[25px] items-center"><Caret small /></span>
      <div className="ml-[3px] flex h-[26px] min-w-0 flex-1 items-center border border-[#a9c4e0] bg-white pr-1">
        <input type="search" aria-label="検索" placeholder="検索" className="min-w-0 flex-1 pl-[6px] outline-none placeholder:text-[#8a8a8a]" />
        <svg width="16" height="16" viewBox="0 0 16 16" fill="none" stroke="#44659e" aria-hidden="true"><circle cx="10" cy="6" r="5" strokeWidth="1.300" /><path d="M6.500 9.500L1 15" strokeWidth="2" /></svg>
      </div>
      <span className="w-[14px] text-center text-[14px] leading-4">»</span>
    </div>
    <div className="mx-[6px] mr-[3px] flex min-h-0 flex-1 flex-col border border-[#b0b0b0] bg-white">
      <div className="flex h-[19px] shrink-0 items-center gap-[9px] pl-[2px]">
        <VLogo size={16} square />
        <span className="text-[13px] leading-none">«</span>
        <span>名称未設定 2</span>
      </div>
      <table className="w-full table-fixed border-collapse text-left">
        <thead>
          <tr className="h-[21px] border-y border-[#c4c4c4] bg-[#f2f2f2]">
            <th className="w-[96px] border-r border-[#c4c4c4] pl-1 font-normal">名前</th>
            <th className="pl-1 font-normal">
              <div className="flex items-center justify-between pr-[6px] text-[11px]">
                タイプ
                <svg width="8" height="5" viewBox="0 0 8 5" aria-hidden="true"><path d="M0 4.500l4-4 4 4" fill="none" stroke="#777" /></svg>
              </div>
            </th>
          </tr>
        </thead>
        <tbody>
          <tr className="h-[25px] whitespace-nowrap bg-[#cce7fd] text-[#178a3c]">
            <td className="pl-[3px]">
              <div className="flex items-center">
                <svg width="27" height="12" viewBox="0 0 27 12" className="shrink-0" aria-hidden="true">
                  <path d="M0 0h27v12H0z" fill="#fff" />
                  <path d="M0 6.500h27" stroke="#444" strokeDasharray="4 1" />
                </svg>
                ISO-02 破線
              </div>
            </td>
            <td className="pl-[5px] text-[11px]">ラインタイプ</td>
          </tr>
        </tbody>
      </table>
      <div className="ml-[96px] flex-1 border-l border-[#edf3fa]" />
      <div className="h-[18px] shrink-0 border-t border-[#b8b8b8] pr-[2px] text-right leading-[14px]">1&nbsp; 項目</div>
    </div>
    <div className="flex h-[28px] shrink-0 items-center gap-[7px] pl-[7px]">
      <button className="h-[26px] w-[76px] whitespace-nowrap border border-[#a9cbe8] bg-[#fdfdfd] text-[11px]">新規リソース...</button>
      <button className="h-[26px] w-[76px] whitespace-nowrap border border-[#a9cbe8] bg-[#fdfdfd] text-[11px]">新規フォルダ...</button>
      <Sep />
    </div>
  </section>
);

const snaps = [
  ['グリッドスナップ', '', <path d="M6 3v6M3 6h6M16 3v6M13 6h6M6 13v6M3 16h6M16 13v6M13 16h6" stroke="#111" strokeWidth="1.500" />],
  ['図形スナップ', 'bg-[#cbe4f7]', <><path d="M5 5h14v14H5z" stroke="#111" strokeWidth="1.500" /><path d="M3 3h4v4H3zM17 3h4v4h-4zM3 17h4v4H3zM17 17h4v4h-4z" fill="#777" stroke="#333" strokeWidth="1" /></>],
  ['角度スナップ', '', <path d="M4 3v17h17M4 20L18 5M6 6c7 0 11 6 12 13" stroke="#222" strokeWidth="1.500" />],
  ['交点スナップ', 'bg-[#cbe4f7]', <path d="M3 3l7 7M14 14l7 7M21 3l-7 7M10 14l-7 7M12 12h.100" stroke="#111" strokeWidth="1.800" />],
  ['スマートポイント', 'bg-[#cbe4f7]', <path d="M2 3h5v5H2zM10 5h2M15 5h2M20 5h2M4.500 11v2M4.500 16v2M4.500 21v1" stroke="#111" strokeWidth="1.600" />],
  ['定点スナップ', '', <path d="M3 21l6-6M12 12h.100M15 9l6-6" stroke="#111" strokeWidth="1.800" />],
  ['スマートエッジ', '', <path d="M3 21L17 4M8 14l5-5 5 5-5 5zM15 17l5 4" stroke="#222" strokeWidth="1.600" />],
  ['接線スナップ', '', <path d="M2 4c9 0 16 6 17 16M5 3l16 10M13 9l-1 5" stroke="#111" strokeWidth="1.600" />],
  ['作業平面', 'bg-[#a0a0a0]', <path d="M1 12l11-9 11 9-11 9zM6.500 7.500l11 9M17.500 7.500l-11 9" fill="#ddd" stroke="#222" strokeWidth="1.300" />],
  ['一時停止', 'ml-[5px]', <path d="M8 5v14M16 5v14" stroke="#000" strokeWidth="4" strokeLinecap="butt" />],
  ['設定', '', <>{GEAR_TEETH.map((a) => <path key={a} d="M10.500 7V5h3v2z" fill="#000" stroke="#000" transform={`rotate(${a} 12 12)`} />)}<circle cx="12" cy="12" r="4" stroke="#000" strokeWidth="3.500" /></>],
];

const StatusBar = () => (
  <footer className="flex h-6 shrink-0 items-center pl-[2px]">
    <span>配列複製...</span>
    <div className="ml-auto flex items-center">
      <span className="w-[105px]">X: -6750</span>
      <span className="w-[110px]">Y: 1565</span>
      {snaps.map(([name, style, art], i) => (
        <button key={name} aria-label={name} className={'relative mr-px flex h-[22px] w-6 items-center justify-center border border-[#b8b8b8] ' + style}>
          <Icon w={18} h={18}>{art}</Icon>
          {i < 7 && (
            <svg width="6" height="6" viewBox="0 0 6 6" className="absolute bottom-0 right-0" aria-hidden="true"><path d="M5.500.500v5h-5z" fill="#eee" stroke="#555" /></svg>
          )}
        </button>
      ))}
      <svg width="15" height="18" viewBox="0 0 15 18" aria-hidden="true"><path d="M2 18L15 5M8 18l7-7" stroke="#bbb" /></svg>
    </div>
  </footer>
);

const App = () => {
  return (
    <div className="relative flex min-h-screen w-full flex-col bg-[#f0f0f0] font-['Noto_Sans','Noto_Sans_CJK_JP',sans-serif] text-[12px] leading-4 text-[#1a1a1a] [font-feature-settings:'palt']">
      <header className="flex h-[23px] shrink-0 items-start bg-white pl-[7px]">
        <VLogo size={16} />
        <h1 className="ml-1 whitespace-nowrap pt-px font-['Roboto','Noto_Sans_CJK_JP',sans-serif] text-[12px]">Vectorworks Fundamentals 2022 - [名称未設定 2]</h1>
        <div className="ml-auto flex h-[17px] items-center gap-9 pr-5">
          <button aria-label="最小化"><svg width="11" height="11"><path d="M0 5.500h11" stroke="#222" /></svg></button>
          <button aria-label="最大化"><svg width="11" height="11"><path d="M.5.500h9v9h-9z" fill="none" stroke="#222" /></svg></button>
          <button aria-label="閉じる"><svg width="11" height="11"><path d="M.5.500l10 10M10.500.500l-10 10" stroke="#222" /></svg></button>
        </div>
      </header>

      <nav className="flex h-[29px] shrink-0 items-center">
        <span className="ml-[2px] mr-[-1px] flex w-[18px]"><VLogo size={15} square /></span>
        {menuBar.map(([name, width]) => (
          <button
            key={name}
            className={'h-[27px] shrink-0 whitespace-nowrap text-center ' + width + (name === '編集' ? ' mx-px border border-b-0 border-[#a0a0a0]' : '')}
          >
            {name}
          </button>
        ))}
        <div className="ml-auto flex h-full items-center">
          <button aria-label="検索"><svg width="11" height="11" viewBox="0 0 11 11" fill="none"><circle cx="4" cy="4" r="3" stroke="#777" /><path d="M6 6l4 4" stroke="#777" strokeWidth="2" /></svg></button>
          <button aria-label="通知" className="ml-[18px]">
            <svg width="16" height="16" viewBox="0 0 16 16">
              <path d="M1 14c0-7 2-9 5-9l4 9z" fill="#999" stroke="#555" />
              <circle cx="10" cy="6" r="5" fill="#f00" />
              <path d="M10 3.500v5" stroke="#fff" />
            </svg>
          </button>
          <svg width="11" height="12" viewBox="0 0 11 12" className="ml-7" aria-hidden="true"><path d="M3 6V3c0-3 5-3 5 0v3M1 7h9v4H1z" fill="#999" stroke="#444" /></svg>
          <a href="#signin" className="ml-1 whitespace-nowrap pl-[2px] text-[11px]">サインイン</a>
          <div className="ml-[52px] mr-[5px] flex items-end gap-2 self-end pb-[5px]">
            <svg width="8" height="9" viewBox="0 0 8 9" aria-hidden="true"><path d="M1 7.500h6" stroke="#000" strokeWidth="2" /></svg>
            <svg width="10" height="9" viewBox="0 0 10 9" fill="none" aria-hidden="true"><path d="M3 3V1h6v5H7M1 4h6v4H1z" stroke="#000" strokeWidth="1.500" /></svg>
            <Cross />
          </div>
        </div>
      </nav>

      <main className="flex min-h-0 flex-1">
        <LeftPanel />
        <div className="ml-[3px] flex min-w-0 flex-1 flex-col border-l border-[#c0c0c0] font-['Liberation_Sans','Noto_Sans_CJK_JP',sans-serif]">
          <div className="flex h-[20px] shrink-0 items-center justify-end border-t border-[#bcbcbc] bg-[#f8f8f8] pr-1">
            <button aria-label="書類の一覧"><Caret /></button>
          </div>
          <div className="mb-px h-[2px] shrink-0 bg-[#b5b5b5]" />
          <ViewBar />
          <ModeBar />
          <TopRuler />
          <Canvas />
          <div className="h-[2px] shrink-0" />
        </div>
        <div className="mr-[5px] w-1 border-x border-[#c4c4c4]" />
        <aside className="mr-[2px] flex w-[191px] shrink-0 flex-col">
          <ObjectInfo />
          <ResourceManager />
        </aside>
      </main>

      <StatusBar />
      <EditMenu />
    </div>
  );
};

export default App;
